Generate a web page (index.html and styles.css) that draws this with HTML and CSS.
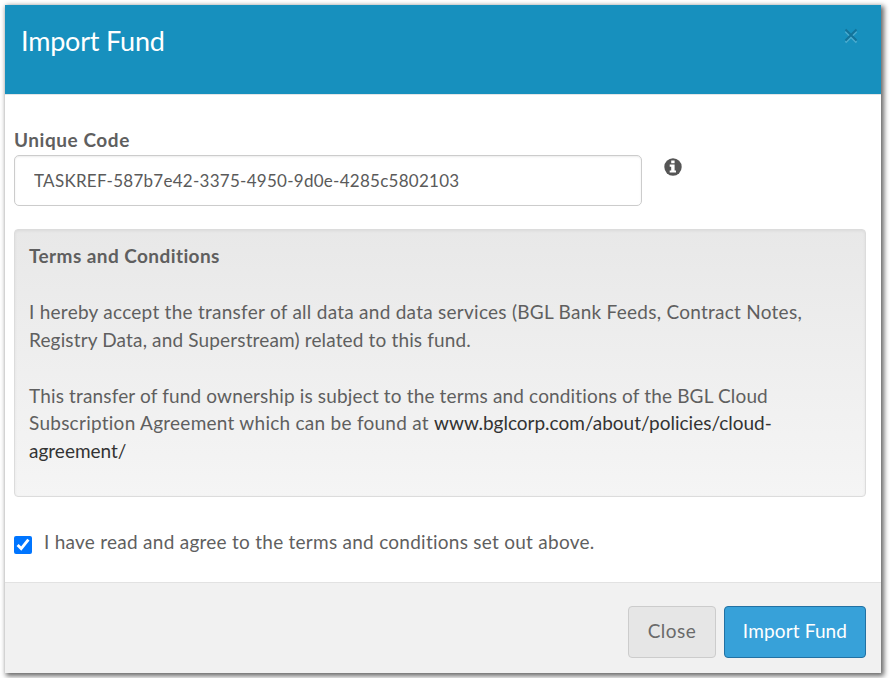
FILE: index.html
```html
<!DOCTYPE html>
<html lang="en">
<head>
    <meta charset="UTF-8">
    <meta name="viewport" content="width=device-width, initial-scale=1.0">
    <title>Import Fund</title>
    <link rel="stylesheet" href="styles.css">
</head>
<body>
    <div class="modal">
        <div class="modal-header">
            <h3 class="modal-title">Import Fund</h3>
            <button type="button" class="close" aria-label="Close">
                <svg width="16" height="18" viewBox="0 0 16 18">
                    <path class="close-shadow" d="M2.5 4.5l11 11m0-11l-11 11"/>
                    <path class="close-mark" d="M2.5 2.5l11 11m0-11l-11 11"/>
                </svg>
            </button>
        </div>
        <div class="modal-body">
            <label class="field-label" for="code">Unique Code</label>
            <div class="field-row">
                <input type="text" class="field" id="code" value="TASKREF-587b7e42-3375-4950-9d0e-4285c5802103">
                <svg class="info" width="18" height="18" viewBox="0 0 18 18">
                    <circle cx="9" cy="9" r="8.7" fill="#555"/>
                    <path fill="#fff" d="M7.2 2.4h3.4v2.8H7.2zM5.7 6.6h4.9v5.8h1.4v2.2H5.7v-2.2h1.5V8.8H5.7z"/>
                </svg>
            </div>
            <div class="well">
                <p class="well-title">Terms and Conditions</p>
                <p class="transfer">I hereby accept the transfer of all data and data services (BGL Bank Feeds, Contract Notes,<br><span class="tight">Registry Data, and Superstream) related to this fund.</span></p>
                <p class="ownership"><span class="tight">This transfer of fund ownership is subject to the terms and conditions of the BGL Cloud</span><br>Subscription Agreement which can be found at <a class="link">www.bglcorp.com/about/policies/cloud-<br>agreement/</a></p>
            </div>
            <label class="agree">
                <input type="checkbox" class="check" checked>
                <span>I have read and agree to the terms and conditions set out above.</span>
            </label>
        </div>
        <div class="modal-footer">
            <button type="button" class="btn">Close</button>
            <button type="button" class="btn btn-primary">Import Fund</button>
        </div>
    </div>
</body>
</html>
```
FILE: styles.css
```css
* {
    box-sizing: border-box;
}

body {
    margin: 0;
    padding: 5px;
    background: #fff;
    color: #5f5f5f;
    font-family: Lato, "Liberation Sans", sans-serif;
    font-size: 19px;
    line-height: 27.9px;
    letter-spacing: .26px;
    font-variant-ligatures: none;
    overflow: hidden;
}

.modal {
    display: flex;
    flex-direction: column;
    width: 876px;
    height: 668px;
    background: #fff;
    box-shadow: 2px 2px 5px 1px rgba(0, 0, 0, .6);
}

.modal-header {
    display: flex;
    justify-content: space-between;
    height: 90px;
    padding: 16px 22px 0 16px;
    background: #1790be;
    border-bottom: 1px solid #e2e5e7;
}

.modal-title {
    margin: 0;
    color: #fff;
    font-size: 27px;
    font-weight: 400;
    line-height: 40px;
    letter-spacing: -.2px;
}

.close {
    width: 16px;
    height: 18px;
    margin-top: 6px;
    padding: 0;
    border: 0;
    background: none;
}

.close svg {
    display: block;
    fill: none;
    stroke-width: 2;
}

.close-shadow {
    stroke: #4aabcf;
}

.close-mark {
    stroke: #13739a;
}

.modal-body {
    flex: 1;
    padding: 31px 15px 0 9px;
}

.field-label {
    display: block;
    height: 29px;
    font-weight: 700;
    letter-spacing: .55px;
}

.field-row {
    display: flex;
    gap: 22px;
}

.field {
    width: 628px;
    height: 51px;
    padding: 0 19px 1px;
    border: 1px solid #ccc;
    border-radius: 5px;
    box-shadow: inset 0 1px 2px rgba(0, 0, 0, .08);
    color: #5a5a5a;
    font-family: inherit;
    font-size: 17px;
    letter-spacing: .27px;
}

.info {
    margin-top: 3px;
}

.well {
    height: 268px;
    margin-top: 23px;
    padding: 12px 14px;
    border: 1px solid #dcdcdc;
    border-radius: 4px;
    background: linear-gradient(#e8e8e8, #f5f5f5);
    box-shadow: inset 0 1px 3px rgba(0, 0, 0, .06);
    white-space: nowrap;
}

.well p {
    margin: 0 0 27.9px;
}

.well-title {
    font-weight: 700;
    letter-spacing: .42px;
}

.tight {
    letter-spacing: .15px;
}

.link {
    color: #333;
    letter-spacing: 0;
}

.agree {
    display: flex;
    gap: 12px;
    margin-top: 31px;
}

.check {
    width: 18px;
    height: 18px;
    margin: 8px 0 0;
    accent-color: #0075ff;
}

.modal-footer {
    display: flex;
    justify-content: flex-end;
    gap: 8px;
    height: 91px;
    padding: 23px 15px 0;
    border-top: 1px solid #e2e2e2;
    background: #f1f1f1;
}

.btn {
    width: 88px;
    height: 52px;
    padding: 0 0 4px;
    border: 1px solid #ccc;
    border-radius: 4px;
    background: #e6e6e6;
    color: #6a6a6a;
    font-family: inherit;
    font-size: 19px;
    letter-spacing: .5px;
}

.btn-primary {
    width: 142px;
    border-color: #2271a3;
    background: #37a1d9;
    color: #fff;
    letter-spacing: .15px;
}
```
